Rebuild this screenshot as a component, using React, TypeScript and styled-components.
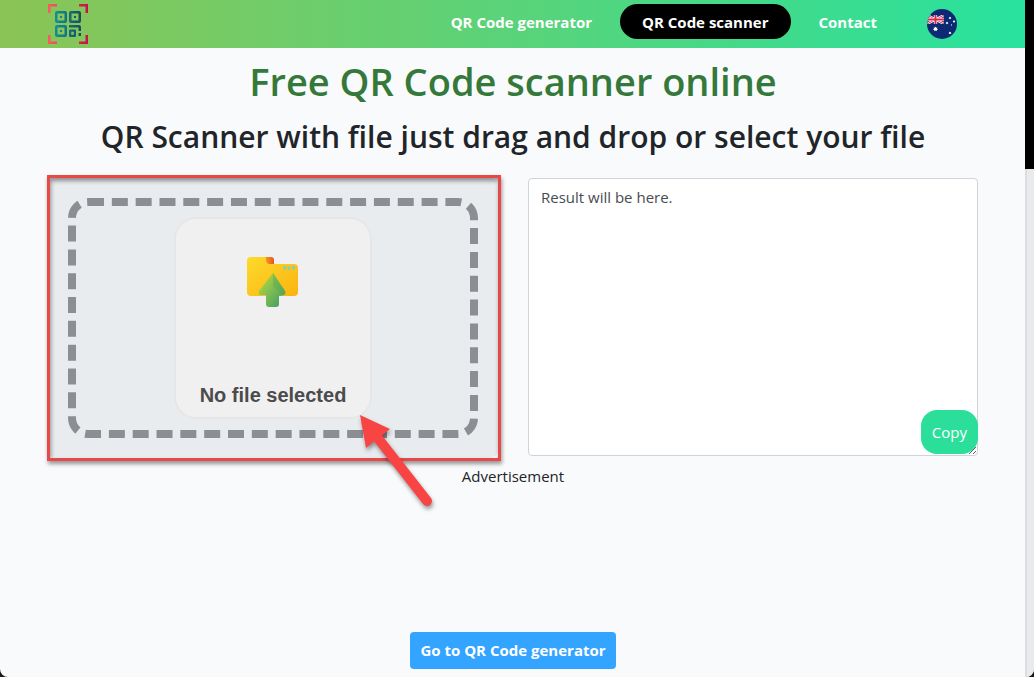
import React from "react";
import styled, { createGlobalStyle } from "styled-components";

const sans = `"Open Sans", "Noto Sans", sans-serif`;

const GlobalStyle = createGlobalStyle`
  *, *::before, *::after { box-sizing: border-box; }
  body { margin: 0; background: #16181a; font-family: ${sans}; color: #212529; }
`;

const Window = styled.div`
  display: grid;
  grid-template-columns: minmax(0, 1fr) 9px;
  min-height: 100vh;
  background: #f9fafb;
  border-radius: 0 0 8px 8px;
  overflow: hidden;
`;

const Page = styled.div`
  display: flex;
  flex-direction: column;
`;

const ScrollTrack = styled.div`
  background: linear-gradient(90deg, #dcdde0 0 2px, #e9eaec 2px);
`;

const ScrollThumb = styled.div`
  height: 25vh;
  background: #000;
`;

const Header = styled.header`
  display: flex;
  align-items: center;
  justify-content: space-between;
  height: 48px;
  padding: 0 68px 0 48px;
  background: linear-gradient(90deg, #8bc455, #28e29e);
`;

const Brand = styled.a`
  display: block;
  height: 40px;
`;

const Nav = styled.nav`
  display: flex;
  align-items: center;
  gap: 6px;
`;

const NavLink = styled.a<{ $active?: boolean }>`
  height: 35px;
  margin-bottom: 6px;
  padding: 0 22px;
  border-radius: 18px;
  background: ${(p) => (p.$active ? "#000" : "transparent")};
  color: #fff;
  font-size: 15px;
  font-weight: 700;
  line-height: 36px;
  text-decoration: none;
  white-space: nowrap;
`;

const LanguageButton = styled.button`
  display: block;
  width: 30px;
  height: 30px;
  margin-left: 22px;
  padding: 0;
  border: 0;
  border-radius: 50%;
  background: none;
`;

const Main = styled.main`
  display: flex;
  flex-direction: column;
  flex: 1;
  padding: 9px 47px 8px 48px;
`;

const Title = styled.h1`
  margin: 0 0 8px;
  color: #35793a;
  font-size: 38px;
  font-weight: 600;
  line-height: 48px;
  text-align: center;
`;

const Subtitle = styled.h2`
  margin: 0 0 17px;
  font-size: 30px;
  font-weight: 600;
  line-height: 48px;
  text-align: center;
`;

const Columns = styled.div`
  display: grid;
  grid-template-columns: repeat(2, minmax(0, 1fr));
  align-items: start;
  gap: 30px;
`;

const DropPanel = styled.section`
  position: relative;
  padding: 20px;
  border-radius: 8px;
  background: #e9ecef;
`;

const DropZone = styled.div`
  display: flex;
  justify-content: center;
  padding: 11px;
  border: 8px dashed #8b8f94;
  border-radius: 20px;
`;

const FileCard = styled.label`
  display: flex;
  flex-direction: column;
  align-items: center;
  justify-content: space-between;
  width: 198px;
  height: 202px;
  padding: 37px 0 10px;
  border: 2px solid #e6e6e7;
  border-radius: 22px;
  background: #f0f0f0;
  color: #4b4b4b;
  font: 700 20px/24px "Liberation Sans", Arial, sans-serif;
`;

const FileInput = styled.input`
  position: absolute;
  width: 1px;
  height: 1px;
  opacity: 0;
`;

const Highlight = styled.div`
  position: absolute;
  inset: -3px -3px -3px -1px;
  border: 3px solid #e84848;
  box-shadow: 1px 3px 4px rgba(0, 0, 0, 0.4), inset 1px 3px 4px rgba(0, 0, 0, 0.4);
  pointer-events: none;
`;

const Pointer = styled.svg`
  position: absolute;
  right: 58px;
  bottom: -58px;
  filter: drop-shadow(1px 3px 2px rgba(0, 0, 0, 0.4));
  pointer-events: none;
`;

const ResultPanel = styled.section`
  position: relative;
`;

const Result = styled.textarea`
  display: block;
  width: 100%;
  height: 278px;
  padding: 6px 12px;
  border: 1px solid #ced4da;
  border-radius: 4px;
  background: #fff;
  color: #212529;
  font-family: ${sans};
  font-size: 15px;
  line-height: 24px;

  &::placeholder { color: #474c51; opacity: 1; }
`;

const CopyButton = styled.button`
  position: absolute;
  right: 0;
  bottom: 2px;
  height: 44px;
  padding: 0 11px;
  border: 0;
  border-radius: 16px;
  background: #2bdf9b;
  color: #fff;
  font-family: ${sans};
  font-size: 15px;
`;

const AdLabel = styled.p`
  margin: 6px 0 0;
  font-size: 15px;
  line-height: 24px;
  text-align: center;
`;

const GeneratorLink = styled.a`
  align-self: center;
  margin-top: auto;
  padding: 0 10px;
  border-radius: 4px;
  background: #33a4ff;
  color: #fff;
  font-size: 15px;
  font-weight: 700;
  line-height: 37px;
  text-decoration: none;
`;

const Logo = () => (
  <svg width="40" height="40" viewBox="0 0 40 40" fill="none">
    <defs>
      <linearGradient id="frame" x1="0" x2="1">
        <stop offset="0" stopColor="#f0625e" />
        <stop offset="1" stopColor="#c5114b" />
      </linearGradient>
      <linearGradient id="code" x1="0" x2="1">
        <stop offset="0" stopColor="#13909b" />
        <stop offset="1" stopColor="#15505c" />
      </linearGradient>
    </defs>
    <path fill="url(#frame)" d="M0 0h9v2.500H2.500V9H0zM31 0h9v9h-2.500V2.500H31zM0 31h2.500v6.500H9V40H0zM37.500 31H40v9h-9v-2.500h6.500z" />
    <path
      fill="url(#code)"
      fillRule="evenodd"
      d="M9 7h8a2 2 0 0 1 2 2v8a2 2 0 0 1-2 2H9a2 2 0 0 1-2-2V9a2 2 0 0 1 2-2zm.5 2.500v7h7v-7zm2.500 2.500h2v2h-2zM23 7h8a2 2 0 0 1 2 2v8a2 2 0 0 1-2 2h-8a2 2 0 0 1-2-2V9a2 2 0 0 1 2-2zm.5 2.500v7h7v-7zm2.500 2.500h2v2h-2zM9 21h8a2 2 0 0 1 2 2v8a2 2 0 0 1-2 2H9a2 2 0 0 1-2-2v-8a2 2 0 0 1 2-2zm.5 2.500v7h7v-7zm2.500 2.500h2v2h-2zM21 21h10a2 2 0 0 1 2 2v4h-2.500v-3.500H21zM22 25.500h5a1 1 0 0 1 1 1V32a1 1 0 0 1-1 1h-5a1 1 0 0 1-1-1v-5.500a1 1 0 0 1 1-1zm1.300 2.300v3h2.500v-3zM30.500 29H33v3h-2.500z"
    />
  </svg>
);

const stars: [number, number, number][] = [
  [8.5, 20, 2.6],
  [23, 24, 1.5],
  [20, 14, 1.4],
  [23, 9, 1.4],
  [27, 12.5, 1.4],
  [24.5, 16, 0.8],
];

const AustraliaFlag = () => (
  <svg width="30" height="30" viewBox="0 0 30 30">
    <clipPath id="disc"><circle cx="15" cy="15" r="15" /></clipPath>
    <clipPath id="canton"><path d="M0 6h17v9H0z" /></clipPath>
    <g clipPath="url(#disc)">
      <path fill="#0b2a73" d="M0 0h30v30H0z" />
      <g clipPath="url(#canton)">
        <path stroke="#fff" strokeWidth="2.4" d="M0 6l17 9M17 6L0 15" />
        <path stroke="#d8274c" strokeWidth="1" d="M0 6l17 9M17 6L0 15" />
        <path stroke="#fff" strokeWidth="3.4" d="M8.5 6v9M0 10.500h17" />
        <path stroke="#d8274c" strokeWidth="2" d="M8.5 6v9M0 10.500h17" />
      </g>
      {stars.map(([x, y, r]) => (
        <path
          key={`${x}-${y}`}
          fill="#fff"
          transform={`translate(${x} ${y}) scale(${r})`}
          d="M0-1L.25-.5.78-.62.55-.12 1 .22.45.35.43.9 0 .55-.43.9-.45.35-1 .22-.55-.12-.78-.62-.25-.5z"
        />
      ))}
    </g>
  </svg>
);

const FolderUpload = () => (
  <svg width="52" height="52" viewBox="0 0 52 52">
    <defs>
      <linearGradient id="folder" x1="0" y1="0" x2="1" y2="1">
        <stop offset="0" stopColor="#fdda2c" />
        <stop offset="1" stopColor="#fbb310" />
      </linearGradient>
      <linearGradient id="fold" x1="0" x2="1">
        <stop offset="0" stopColor="#fbb41c" />
        <stop offset="1" stopColor="#e5571f" />
      </linearGradient>
      <linearGradient id="arrow" x1="0" y1="0" x2="1" y2="1">
        <stop offset="0.2" stopColor="#a8d143" />
        <stop offset="1" stopColor="#35996a" />
      </linearGradient>
    </defs>
    <path fill="url(#fold)" d="M15 1h9a3 3 0 0 1 3 3v8H15z" />
    <path fill="url(#folder)" d="M4 1h13c2 0 2 1 2 3s1 4 4 4h24a4 4 0 0 1 4 4v24a4 4 0 0 1-4 4H4a4 4 0 0 1-4-4V5a4 4 0 0 1 4-4z" />
    <path fill="#8fcf9f" d="M36 10h3v4h-2zM40 10h3v4h-2zM44 10h4v3l-2 1z" />
    <path fill="#7caf58" d="M32 28l6 7v3l-3 2h-4z" />
    <path fill="url(#arrow)" d="M26 17l12 18c1 2 0 4-2 4h-4v9a3 3 0 0 1-3 3h-7a3 3 0 0 1-3-3v-9h-5c-2 0-3-2-2-4z" />
    <path fill="#5aa94f" opacity="0.45" d="M26 17l12 18c1 2 0 4-2 4l-10-9z" />
  </svg>
);

export default function App() {
  return (
    <>
      <GlobalStyle />
      <Window>
        <Page>
          <Header>
            <Brand href="#" aria-label="Home"><Logo /></Brand>
            <Nav>
              <NavLink href="#generator">QR Code generator</NavLink>
              <NavLink href="#scanner" $active aria-current="page">QR Code scanner</NavLink>
              <NavLink href="#contact">Contact</NavLink>
              <LanguageButton type="button" aria-label="Language"><AustraliaFlag /></LanguageButton>
            </Nav>
          </Header>
          <Main>
            <Title>Free QR Code scanner online</Title>
            <Subtitle>QR Scanner with file just drag and drop or select your file</Subtitle>
            <Columns>
              <DropPanel>
                <DropZone>
                  <FileCard htmlFor="qr-file">
                    <FolderUpload />
                    No file selected
                  </FileCard>
                  <FileInput id="qr-file" type="file" accept="image/*" />
                </DropZone>
                <Highlight />
                <Pointer width="82" height="102" viewBox="0 0 82 102">
                  <path stroke="#f94444" strokeWidth="10" strokeLinecap="round" d="M19 23L69 87" />
                  <path fill="#f94444" d="M2 1L32 15 8 34z" />
                </Pointer>
              </DropPanel>
              <ResultPanel>
                <Result aria-label="Result" placeholder="Result will be here." />
                <CopyButton type="button">Copy</CopyButton>
              </ResultPanel>
            </Columns>
            <AdLabel>Advertisement</AdLabel>
            <GeneratorLink href="#generator">Go to QR Code generator</GeneratorLink>
          </Main>
        </Page>
        <ScrollTrack><ScrollThumb /></ScrollTrack>
      </Window>
    </>
  );
}
